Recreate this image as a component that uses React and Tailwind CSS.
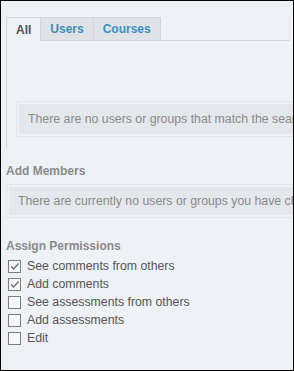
const perms = [
  { label: 'See comments from others', checked: true },
  { label: 'Add comments', checked: true },
  { label: 'See assessments from others', checked: false },
  { label: 'Add assessments', checked: false },
  { label: 'Edit', checked: false },
];

const Check = ({ checked }) => (
  <span className="w-[13px] h-[13px] border border-[#7d7d7d] bg-[#f6f7f9] flex items-center justify-center shrink-0">
    {checked && (
      <svg width="11" height="11" viewBox="0 0 11 11">
        <path d="M2 5.5 L4.5 8 L9.5 2.5" fill="none" stroke="#6b6b6b" strokeWidth="1.3" />
      </svg>
    )}
  </span>
);

export default function App() {
  return (
    <div className="w-[294px] h-[371px] border border-black bg-[#eef1f5] overflow-hidden font-['Liberation_Sans',Arial,sans-serif]">
      <div className="pt-[16px] pl-[5px] pr-[3px]">
        <div className="flex border-b border-[#d2d6db] border-r border-r-[#dfe3e7] h-[24px]">
          <div className="px-[9px] flex items-center text-[12px] font-bold text-[#505050] bg-[#eef1f5] border border-[#d2d6db] border-b-0 -mb-px h-[24px]">
            All
          </div>
          <div className="px-[9px] flex items-center text-[12px] font-bold text-[#3b8fba] bg-[#dfe3e8] border border-[#d2d6db] border-l-0 border-b-0 h-[23px]">
            Users
          </div>
          <div className="px-[9px] flex items-center text-[12px] font-bold text-[#3b8fba] bg-[#dfe3e8] border border-[#d2d6db] border-l-0 border-b-0 h-[23px]">
            Courses
          </div>
        </div>
        <div className="border-l border-[#d2d6db] pt-[60px] pb-[12px] pl-[9px] -mr-[40px]">
          <div className="border border-[#e2e5e9] p-[2px]">
            <div className="bg-[#e4e7eb] h-[30px] flex items-center pl-[9px] text-[12.3px] text-[#8a8a8a] whitespace-nowrap">
              There are no users or groups that match the search criteria
            </div>
          </div>
        </div>
      </div>
      <div className="pl-[5px] -mr-[40px]">
        <div className="mt-[13px] h-[18px] leading-[18px] text-[12px] font-bold text-[#8a8a8a]">Add Members</div>
        <div className="mt-[4px] border border-[#e2e5e9] p-[2px]">
          <div className="bg-[#e4e7eb] h-[28px] flex items-center pl-[9px] text-[12.3px] text-[#8a8a8a] whitespace-nowrap">
            There are currently no users or groups you have chosen
          </div>
        </div>
        <div className="mt-[19px] h-[18px] leading-[18px] text-[12px] font-bold text-[#8a8a8a]">Assign Permissions</div>
        <div className="mt-[5px] pl-[2px] flex flex-col gap-[5px]">
          {perms.map((p) => (
            <div key={p.label} className="flex items-center gap-[6px] h-[13px] text-[12.3px] text-[#555]">
              <Check checked={p.checked} />
              <span>{p.label}</span>
            </div>
          ))}
        </div>
      </div>
    </div>
  );
}
